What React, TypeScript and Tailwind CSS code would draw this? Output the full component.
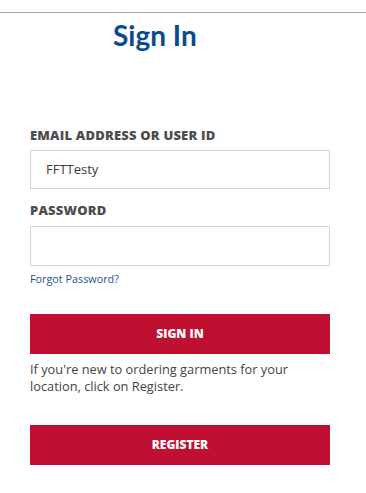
import React from "react";

export default function App() {
  const body = { fontFamily: "'Open Sans', 'Noto Sans', sans-serif" };
  return (
    <div className="w-[366px] h-[493px] bg-white overflow-hidden" style={body}>
      <div className="pt-[12px]">
        <div className="h-px bg-[#a8a8a8]" />
      </div>
      <h1 className="pl-[113px] pt-[6px] text-[28px] leading-[32px] font-bold text-[#0b4a8e]" style={{ fontFamily: "Lato, sans-serif" }}>Sign In</h1>
      <div className="pl-[30px] pr-[36px] pt-[76px]">
        <label className="block text-[13px] leading-[16px] font-extrabold tracking-[0.2px] text-[#4d4d4d]">EMAIL ADDRESS OR USER ID</label>
        <div className="mt-[7px] h-[39px] border border-[#d4d4d4] flex items-center pl-[15px] text-[13px] text-[#3a3a3a]">FFTTesty</div>
        <label className="block mt-[13px] text-[13px] leading-[16px] font-extrabold tracking-[0.2px] text-[#4d4d4d]">PASSWORD</label>
        <div className="mt-[8px] h-[40px] border border-[#d4d4d4]" />
        <a className="block mt-[5px] text-[10.8px] leading-[16px] text-[#1e5394]">Forgot Password?</a>
        <button className="mt-[27px] w-full h-[40px] bg-[#c01032] text-white text-[12px] font-extrabold">SIGN IN</button>
        <p className="mt-[7px] text-[12.8px] leading-[17px] text-[#444444]">If you're new to ordering garments for your location, click on Register.</p>
        <button className="mt-[30px] w-full h-[40px] bg-[#c01032] text-white text-[12px] font-extrabold">REGISTER</button>
      </div>
    </div>
  );
}
